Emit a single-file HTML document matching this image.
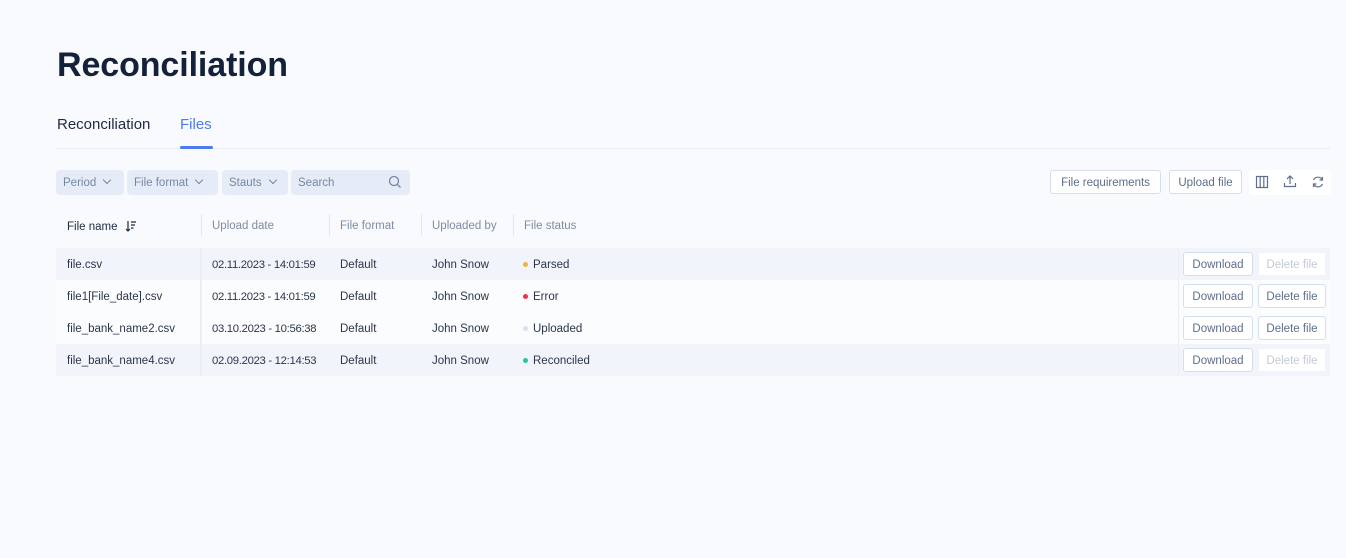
<!DOCTYPE html>
<html><head><style>
*{box-sizing:border-box;margin:0;padding:0}
body{width:1346px;height:558px;background:#f9fafd;font-family:"Liberation Sans",sans-serif;color:#1d2a3f;position:relative;overflow:hidden}
.abs{position:absolute}
h1{position:absolute;left:57px;top:46px;font-size:34px;font-weight:bold;color:#14213a;letter-spacing:-0.1px}
.tab{position:absolute;top:116px;font-size:15px}
.line{position:absolute;left:56px;right:16px;top:148px;height:1px;background:#e8ecf3}
.ul{position:absolute;left:180px;top:146px;width:33px;height:3px;background:#4a7cf0;border-radius:2px}
.chip{position:absolute;top:170px;height:25px;background:#e5ecf7;border-radius:4px;font-size:11.5px;color:#7688a4;padding:1px 7px 0;line-height:25px;white-space:nowrap}
.chev{display:inline-block;width:6px;height:6px;border-right:1.3px solid #7688a4;border-bottom:1.3px solid #7688a4;transform:rotate(45deg);margin-left:8px;position:relative;top:-3px}
.btn{position:absolute;height:24px;border:1.5px solid #d3deee;border-radius:3px;background:#fff;font-size:11.5px;color:#5c6f8c;display:flex;align-items:center;justify-content:center;white-space:nowrap;padding-top:1px}
.btn.dis{border-color:#f2f4f8;color:#c3cad6}
.hd{position:absolute;top:220px;font-size:11.5px;color:#7d8ca3}
.sep{position:absolute;top:214px;width:1px;height:22px;background:#e3e8f0}
.row{position:absolute;left:56px;width:1274px;height:32px}
.row.b{background:#f2f4fc}
.c{position:absolute;font-size:11.5px;color:#2a3649;white-space:nowrap;margin-top:2px}
.d{letter-spacing:-0.3px;font-size:11.3px}
.dot{display:inline-block;width:5px;height:5px;border-radius:50%;margin-right:5px;position:relative;top:-1px}
</style></head><body>
<h1>Reconciliation</h1>
<div class="tab" style="left:57px;color:#1d2a3f">Reconciliation</div>
<div class="tab" style="left:180px;color:#4a7cf0">Files</div>
<div class="line"></div><div class="ul"></div>

<div class="chip" style="left:56px;width:68px">Period<span class="chev"></span></div>
<div class="chip" style="left:127px;width:91px">File format<span class="chev"></span></div>
<div class="chip" style="left:222px;width:66px">Stauts<span class="chev"></span></div>
<div class="chip" style="left:291px;width:119px">Search
<svg class="abs" style="left:97px;top:5px" width="14" height="14" viewBox="0 0 14 14"><circle cx="6" cy="6" r="4.5" fill="none" stroke="#7688a4" stroke-width="1.3"/><path d="M9.3 9.3L12.5 12.5" stroke="#7688a4" stroke-width="1.3"/></svg></div>

<div class="btn" style="left:1050px;top:170px;width:111px">File requirements</div>
<div class="btn" style="left:1169px;top:170px;width:73px">Upload file</div>
<div class="abs" style="left:1249px;top:170px;width:82px;height:25px;background:#fff;border-radius:3px"></div>
<svg class="abs" style="left:1255px;top:175px" width="14" height="14" viewBox="0 0 14 14" fill="none" stroke="#5c6f8c" stroke-width="1.2"><rect x="1.5" y="1.5" width="11" height="11"/><path d="M5.2 1.5v11M8.8 1.5v11"/></svg>
<svg class="abs" style="left:1283px;top:174px" width="14" height="14" viewBox="0 0 14 14" fill="none" stroke="#5c6f8c" stroke-width="1.2"><path d="M7 10V2M4 5l3-3 3 3M1.5 9v3.5h11V9"/></svg>
<svg class="abs" style="left:1311px;top:175px" width="14" height="14" viewBox="0 0 14 14" fill="none" stroke="#5c6f8c" stroke-width="1.2"><path d="M11.5 5A5 5 0 0 0 2.5 5M2.5 9a5 5 0 0 0 9 0M11.5 2v3h-3M2.5 12V9h3"/></svg>

<div class="hd" style="left:67px;top:218px;color:#1d2a3f">File name
<svg style="position:relative;top:2px;margin-left:4px" width="12" height="12" viewBox="0 0 12 12" fill="none" stroke="#1d2a3f" stroke-width="1.2"><path d="M3 1v10M1 9l2 2 2-2M6 2h5M6 5h4M6 8h2.5"/></svg></div>
<div class="sep" style="left:201px"></div>
<div class="hd" style="left:212px">Upload date</div>
<div class="sep" style="left:329px"></div>
<div class="hd" style="left:340px">File format</div>
<div class="sep" style="left:421px"></div>
<div class="hd" style="left:432px">Uploaded by</div>
<div class="sep" style="left:513px"></div>
<div class="hd" style="left:524px">File status</div>

<div class="row b" style="top:248px"></div>
<div class="row" style="top:280px;background:#fbfcfe"></div>
<div class="row" style="top:312px;background:#fbfcfe"></div>
<div class="row b" style="top:344px"></div>
<div class="abs" style="left:200px;top:248px;width:2px;height:128px;background:#e8edf6"></div>
<div class="abs" style="left:1178px;top:248px;width:1px;height:128px;background:#e8edf6"></div>

<div class="c" style="left:67px;top:257px">file.csv</div>
<div class="c d" style="left:212px;top:257px">02.11.2023 - 14:01:59</div>
<div class="c" style="left:340px;top:257px">Default</div>
<div class="c" style="left:432px;top:257px">John Snow</div>
<div class="c" style="left:523px;top:257px"><span class="dot" style="background:#f0b23c"></span>Parsed</div>

<div class="c" style="left:67px;top:289px">file1[File_date].csv</div>
<div class="c d" style="left:212px;top:289px">02.11.2023 - 14:01:59</div>
<div class="c" style="left:340px;top:289px">Default</div>
<div class="c" style="left:432px;top:289px">John Snow</div>
<div class="c" style="left:523px;top:289px"><span class="dot" style="background:#ee3344"></span>Error</div>

<div class="c" style="left:67px;top:321px">file_bank_name2.csv</div>
<div class="c d" style="left:212px;top:321px">03.10.2023 - 10:56:38</div>
<div class="c" style="left:340px;top:321px">Default</div>
<div class="c" style="left:432px;top:321px">John Snow</div>
<div class="c" style="left:523px;top:321px"><span class="dot" style="background:#d6e0ee"></span>Uploaded</div>

<div class="c" style="left:67px;top:353px">file_bank_name4.csv</div>
<div class="c d" style="left:212px;top:353px">02.09.2023 - 12:14:53</div>
<div class="c" style="left:340px;top:353px">Default</div>
<div class="c" style="left:432px;top:353px">John Snow</div>
<div class="c" style="left:523px;top:353px"><span class="dot" style="background:#23c7a0"></span>Reconciled</div>

<div class="btn" style="left:1183px;top:252px;width:70px">Download</div>
<div class="btn dis" style="left:1258px;top:252px;width:68px">Delete file</div>
<div class="btn" style="left:1183px;top:284px;width:70px">Download</div>
<div class="btn" style="left:1258px;top:284px;width:68px">Delete file</div>
<div class="btn" style="left:1183px;top:316px;width:70px">Download</div>
<div class="btn" style="left:1258px;top:316px;width:68px">Delete file</div>
<div class="btn" style="left:1183px;top:348px;width:70px">Download</div>
<div class="btn dis" style="left:1258px;top:348px;width:68px">Delete file</div>
</body></html>
